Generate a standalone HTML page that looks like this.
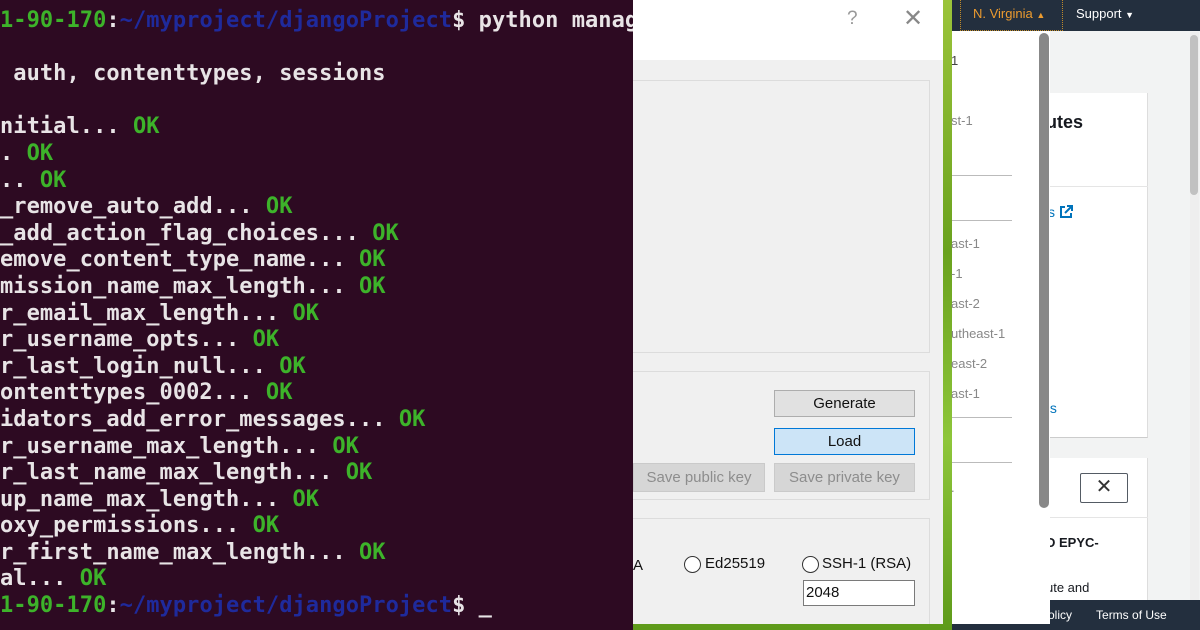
<!DOCTYPE html>
<html><head><meta charset="utf-8"><style>
*{margin:0;padding:0;box-sizing:border-box}
html,body{width:1200px;height:630px;overflow:hidden}
body{position:relative;background:#2d0922;font-family:"Liberation Sans",sans-serif}
.term{position:absolute;left:0;top:0;width:633px;height:630px;background:#2d0a22;overflow:hidden}
.term pre{position:absolute;left:0;top:8px;font-family:"DejaVu Sans Mono","Liberation Mono",monospace;font-weight:bold;font-size:22px;line-height:26.6px;color:#e8e4e6;white-space:pre;letter-spacing:0.05px}
.g{color:#3db32a}.b{color:#1f2a9c}
.abs{position:absolute}
.dlg{left:633px;top:0;width:310px;height:624px;background:#f0f0f0;overflow:hidden}
.btn{position:absolute;border:1px solid #adadad;background:#e1e1e1;font-size:15px;text-align:center;color:#111}
.dis{color:#8d8d8d;background:#d6d6d6;border-color:#cacaca}
.dd{color:#888;font-size:13px;position:absolute;left:951px}
.hr{position:absolute;left:952px;width:60px;height:1px;background:#bbb}
</style></head><body>
<div class="term"><pre><span class="g">1-90-170</span>:<span class="b">~/myproject/djangoProject</span>$ python manage.py migrate

 auth, contenttypes, sessions

nitial... <span class="g">OK</span>
. <span class="g">OK</span>
.. <span class="g">OK</span>
_remove_auto_add... <span class="g">OK</span>
_add_action_flag_choices... <span class="g">OK</span>
emove_content_type_name... <span class="g">OK</span>
mission_name_max_length... <span class="g">OK</span>
r_email_max_length... <span class="g">OK</span>
r_username_opts... <span class="g">OK</span>
r_last_login_null... <span class="g">OK</span>
ontenttypes_0002... <span class="g">OK</span>
idators_add_error_messages... <span class="g">OK</span>
r_username_max_length... <span class="g">OK</span>
r_last_name_max_length... <span class="g">OK</span>
up_name_max_length... <span class="g">OK</span>
oxy_permissions... <span class="g">OK</span>
r_first_name_max_length... <span class="g">OK</span>
al... <span class="g">OK</span>
<span class="g">1-90-170</span>:<span class="b">~/myproject/djangoProject</span>$ _</pre></div>

<div class="abs" style="left:633px;top:0;width:320px;height:630px;background:linear-gradient(180deg,#9bc43a,#6aa21e 40%,#8ec63a 70%,#5e9a1a)"></div>
<div class="abs dlg">
 <div class="abs" style="left:0;top:0;width:310px;height:60px;background:#fff"></div>
 <div class="abs" style="left:214px;top:8px;font-size:19px;color:#999">?</div>
 <div class="abs" style="left:270px;top:4px;font-size:24px;color:#888">✕</div>
 <div class="abs" style="left:-2px;top:80px;width:299px;height:273px;border:1px solid #dcdcdc;background:#f0f0f0"></div>
 <div class="abs" style="left:-2px;top:371px;width:299px;height:129px;border:1px solid #dcdcdc"></div>
 <div class="abs" style="left:-2px;top:518px;width:299px;height:120px;border:1px solid #dcdcdc"></div>
 <div class="btn" style="left:141px;top:390px;width:141px;height:27px;line-height:25px">Generate</div>
 <div class="btn" style="left:141px;top:428px;width:141px;height:27px;line-height:25px;background:#cce4f7;border-color:#0078d7">Load</div>
 <div class="btn dis" style="left:0;top:463px;width:132px;height:29px;line-height:27px">Save public key</div>
 <div class="btn dis" style="left:141px;top:463px;width:141px;height:29px;line-height:27px">Save private key</div>
 <div class="abs" style="left:51px;top:556px;width:17px;height:17px;border:1px solid #333;border-radius:50%;background:#fff"></div>
 <div class="abs" style="left:72px;top:555px;font-size:15px;color:#111">Ed25519</div>
 <div class="abs" style="left:169px;top:556px;width:17px;height:17px;border:1px solid #333;border-radius:50%;background:#fff"></div>
 <div class="abs" style="left:189px;top:555px;font-size:15px;color:#111">SSH-1 (RSA)</div>
 <div class="abs" style="left:170px;top:580px;width:112px;height:26px;border:1px solid #7a7a7a;background:#fff;font-size:15px;padding:3px 2px;color:#111">2048</div>
 <div class="abs" style="left:0;top:557px;font-size:15px;color:#111">A</div>
</div>

<div class="abs" style="left:952px;top:0;width:248px;height:630px;background:#f2f3f3"></div>
<div class="abs" style="left:952px;top:0;width:248px;height:31px;background:#232f3e"></div>
<div class="abs" style="left:960px;top:0;width:103px;height:31px;border:1px dotted #c08a2a;border-top:none;color:#ec9b2f;font-size:13px;line-height:27px;padding-left:12px">N. Virginia <span style="font-size:9px">▲</span></div>
<div class="abs" style="left:1076px;top:0;color:#fff;font-size:13px;line-height:27px">Support <span style="font-size:9px">▼</span></div>
<div class="abs" style="left:1050px;top:93px;width:98px;height:345px;background:#fff;border-right:1px solid #ddd;border-bottom:1px solid #ccc"></div>
<div class="abs" style="left:1050px;top:186px;width:98px;height:1px;background:#e5e5e5"></div>
<div class="abs" style="left:1046px;top:112px;font-weight:bold;font-size:18px;color:#16191f">utes</div>
<div class="abs" style="left:1048px;top:204px;font-size:14px;color:#0073bb">s <svg width="14" height="14" viewBox="0 0 14 14" style="vertical-align:-2px"><path d="M6 2H2v10h10V8" fill="none" stroke="#0073bb" stroke-width="2"/><path d="M8 1h5v5M13 1L6 8" fill="none" stroke="#0073bb" stroke-width="2"/></svg></div>
<div class="abs" style="left:1046px;top:400px;font-size:14px;color:#0073bb">ts</div>
<div class="abs" style="left:1050px;top:458px;width:98px;height:180px;background:#fff;border-right:1px solid #ddd"></div>
<div class="abs" style="left:1050px;top:517px;width:98px;height:1px;background:#e5e5e5"></div>
<div class="abs" style="left:1080px;top:473px;width:48px;height:30px;border:1px solid #545b64;border-radius:2px;text-align:center;font-size:20px;line-height:27px;color:#333">✕</div>
<div class="abs" style="left:1046px;top:535px;font-weight:bold;font-size:13px;color:#16191f">D EPYC-</div>
<div class="abs" style="left:1046px;top:580px;font-size:13px;color:#16191f">ute and</div>
<div class="abs" style="left:1190px;top:32px;width:9px;height:598px;background:#eee"></div>
<div class="abs" style="left:1190px;top:35px;width:8px;height:160px;background:#c1c1c1;border-radius:4px"></div>
<div class="abs" style="left:1050px;top:600px;width:150px;height:30px;background:#232f3e;color:#fff;font-size:12px;line-height:30px"><span style="margin-left:-2px">olicy</span><span style="margin-left:24px">Terms of Use</span></div>
<div class="abs" style="left:952px;top:31px;width:98px;height:593px;background:#fff"></div>
<div class="abs" style="left:952px;top:624px;width:98px;height:6px;background:#232f3e"></div>
<div class="abs" style="left:1039px;top:33px;width:10px;height:475px;background:#888;border-radius:5px"></div>
<div class="dd" style="top:53px;color:#444">1</div>
<div class="dd" style="top:113px">st-1</div>
<div class="hr" style="top:175px"></div>
<div class="hr" style="top:220px"></div>
<div class="dd" style="top:236px">ast-1</div>
<div class="dd" style="top:266px">-1</div>
<div class="dd" style="top:296px">ast-2</div>
<div class="dd" style="top:326px">utheast-1</div>
<div class="dd" style="top:356px">east-2</div>
<div class="dd" style="top:386px">ast-1</div>
<div class="hr" style="top:417px"></div>
<div class="hr" style="top:462px"></div>
<div class="dd" style="top:480px">.</div>
</body></html>
